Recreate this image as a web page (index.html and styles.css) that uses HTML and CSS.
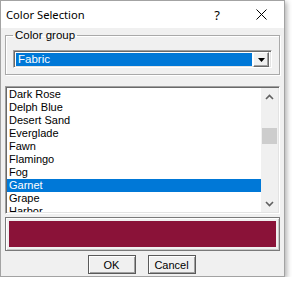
FILE: index.html
```html
<!DOCTYPE html>
<html>
<head>
<meta charset="utf-8">
<link rel="stylesheet" href="styles.css">
</head>
<body>
<div class="window">
  <div class="titlebar">
    <span class="title">Color Selection</span>
    <span class="help">?</span>
    <span class="close">
      <svg width="11" height="11" viewBox="0 0 11 11"><path d="M0.5 0.5L10.5 10.5M10.5 0.5L0.5 10.5" stroke="#000" stroke-width="1" fill="none"/></svg>
    </span>
  </div>
  <div class="content">
    <fieldset class="group">
      <legend class="group-label">Color group</legend>
      <div class="combo">
        <div class="combo-value">Fabric</div>
        <div class="combo-btn">
          <svg width="7" height="4" viewBox="0 0 7 4"><path d="M0 0H7L3.5 4Z" fill="#000"/></svg>
        </div>
      </div>
    </fieldset>
    <div class="listbox">
      <div class="items">
        <div class="item">Dark Rose</div>
        <div class="item">Delph Blue</div>
        <div class="item">Desert Sand</div>
        <div class="item">Everglade</div>
        <div class="item">Fawn</div>
        <div class="item">Flamingo</div>
        <div class="item">Fog</div>
        <div class="item selected">Garnet</div>
        <div class="item">Grape</div>
        <div class="item">Harbor</div>
      </div>
      <div class="scrollbar">
        <div class="arrow">
          <svg width="9" height="6" viewBox="0 0 9 6"><path d="M1 5L4.5 1.5L8 5" stroke="#606060" stroke-width="1.6" fill="none"/></svg>
        </div>
        <div class="track">
          <div class="thumb"></div>
        </div>
        <div class="arrow">
          <svg width="9" height="6" viewBox="0 0 9 6"><path d="M1 1L4.5 4.5L8 1" stroke="#606060" stroke-width="1.6" fill="none"/></svg>
        </div>
      </div>
    </div>
    <div class="swatch"><div class="swatch-color"></div></div>
    <div class="buttons">
      <button class="btn">OK</button>
      <button class="btn">Cancel</button>
    </div>
  </div>
</div>
</body>
</html>
```
FILE: styles.css
```css
html, body {
  margin: 0;
  padding: 0;
  background: #ffffff;
}
.window {
  width: 283px;
  height: 275px;
  border: 1px solid #a3a3a3;
  background: #f0f0f0;
  box-shadow: 2px 2px 5px rgba(0, 0, 0, 0.3);
  display: flex;
  flex-direction: column;
  font-family: "Liberation Sans", Arial, sans-serif;
  font-size: 11px;
  color: #000;
}
.titlebar {
  height: 27px;
  background: #ffffff;
  display: flex;
  align-items: center;
  padding-left: 5px;
  font-family: "Noto Sans", "Liberation Sans", sans-serif;
}
.title {
  font-size: 11.2px;
  flex: 1;
  padding-bottom: 1px;
}
.help {
  font-size: 13px;
  width: 46px;
  text-align: center;
  margin-left: 2px;
  margin-right: -2px;
}
.close {
  width: 46px;
  height: 27px;
  display: flex;
  align-items: center;
  justify-content: center;
}
.content {
  flex: 1;
  display: flex;
  flex-direction: column;
  padding: 0 4px;
}
.group {
  margin: 0;
  padding: 8px 7px 6px 7px;
  border: 1px solid #a9a9a9;
  box-shadow: inset 1px 1px 0 #fff, 1px 1px 0 #fff;
  min-width: 0;
}
.group-label {
  font-family: "Liberation Sans", Arial, sans-serif;
  font-size: 11.5px;
  line-height: 14px;
  padding: 0 2px;
  margin-left: 0;
}
.combo {
  height: 18px;
  box-sizing: border-box;
  border: 1px solid;
  border-color: #a0a0a0 #fff #fff #a0a0a0;
  box-shadow: inset 1px 1px 0 #696969, inset -1px -1px 0 #e3e3e3;
  background: #fff;
  display: flex;
  padding: 2px 2px 1px 2px;
}
.combo-value {
  flex: 1;
  background: #0078d7;
  color: #fff;
  font-size: 11.5px;
  line-height: 13px;
  padding-left: 2px;
  margin-right: 1px;
}
.combo-btn {
  width: 16px;
  box-sizing: border-box;
  margin-top: -1px;
  margin-bottom: -1px;
  background: #f0f0f0;
  border: 1px solid;
  border-color: #fff #696969 #696969 #fff;
  box-shadow: inset -1px -1px 0 #a0a0a0;
  display: flex;
  align-items: center;
  justify-content: center;
}
.listbox {
  margin-top: 11px;
  height: 128px;
  box-sizing: border-box;
  border: 1px solid;
  border-color: #a0a0a0 #fff #fff #a0a0a0;
  box-shadow: inset 1px 1px 0 #696969, inset -1px -1px 0 #e3e3e3;
  background: #fff;
  display: flex;
  padding: 1px;
  overflow: hidden;
}
.items {
  flex: 1;
  overflow: hidden;
}
.item {
  height: 13px;
  line-height: 13px;
  padding-left: 2px;
  white-space: nowrap;
}
.item.selected {
  background: #0078d7;
  color: #fff;
}
.scrollbar {
  width: 17px;
  background: #f0f0f0;
  display: flex;
  flex-direction: column;
}
.arrow {
  height: 17px;
  display: flex;
  align-items: center;
  justify-content: center;
}
.track {
  flex: 1;
  padding-top: 23px;
}
.thumb {
  height: 16px;
  background: #cdcdcd;
  margin: 0 1px;
}
.swatch {
  margin-top: 3px;
  height: 34px;
  box-sizing: border-box;
  border: 1px solid #7a7a7a;
  box-shadow: inset 1px 1px 0 #fff, inset -1px -1px 0 #c8c8c8;
  padding: 3px;
  display: flex;
}
.swatch-color {
  flex: 1;
  background: #8a1238;
}
.buttons {
  margin-top: 4px;
  display: flex;
  justify-content: center;
  gap: 12px;
  padding-right: 2px;
}
.btn {
  width: 48px;
  height: 19px;
  box-sizing: border-box;
  padding: 0;
  margin: 0;
  font-family: "Liberation Sans", Arial, sans-serif;
  font-size: 11px;
  color: #000;
  background: #f0f0f0;
  border: 1px solid #5a5a5a;
  box-shadow: inset 1px 1px 0 #fff, inset -1px -1px 0 #a0a0a0;
}
```
